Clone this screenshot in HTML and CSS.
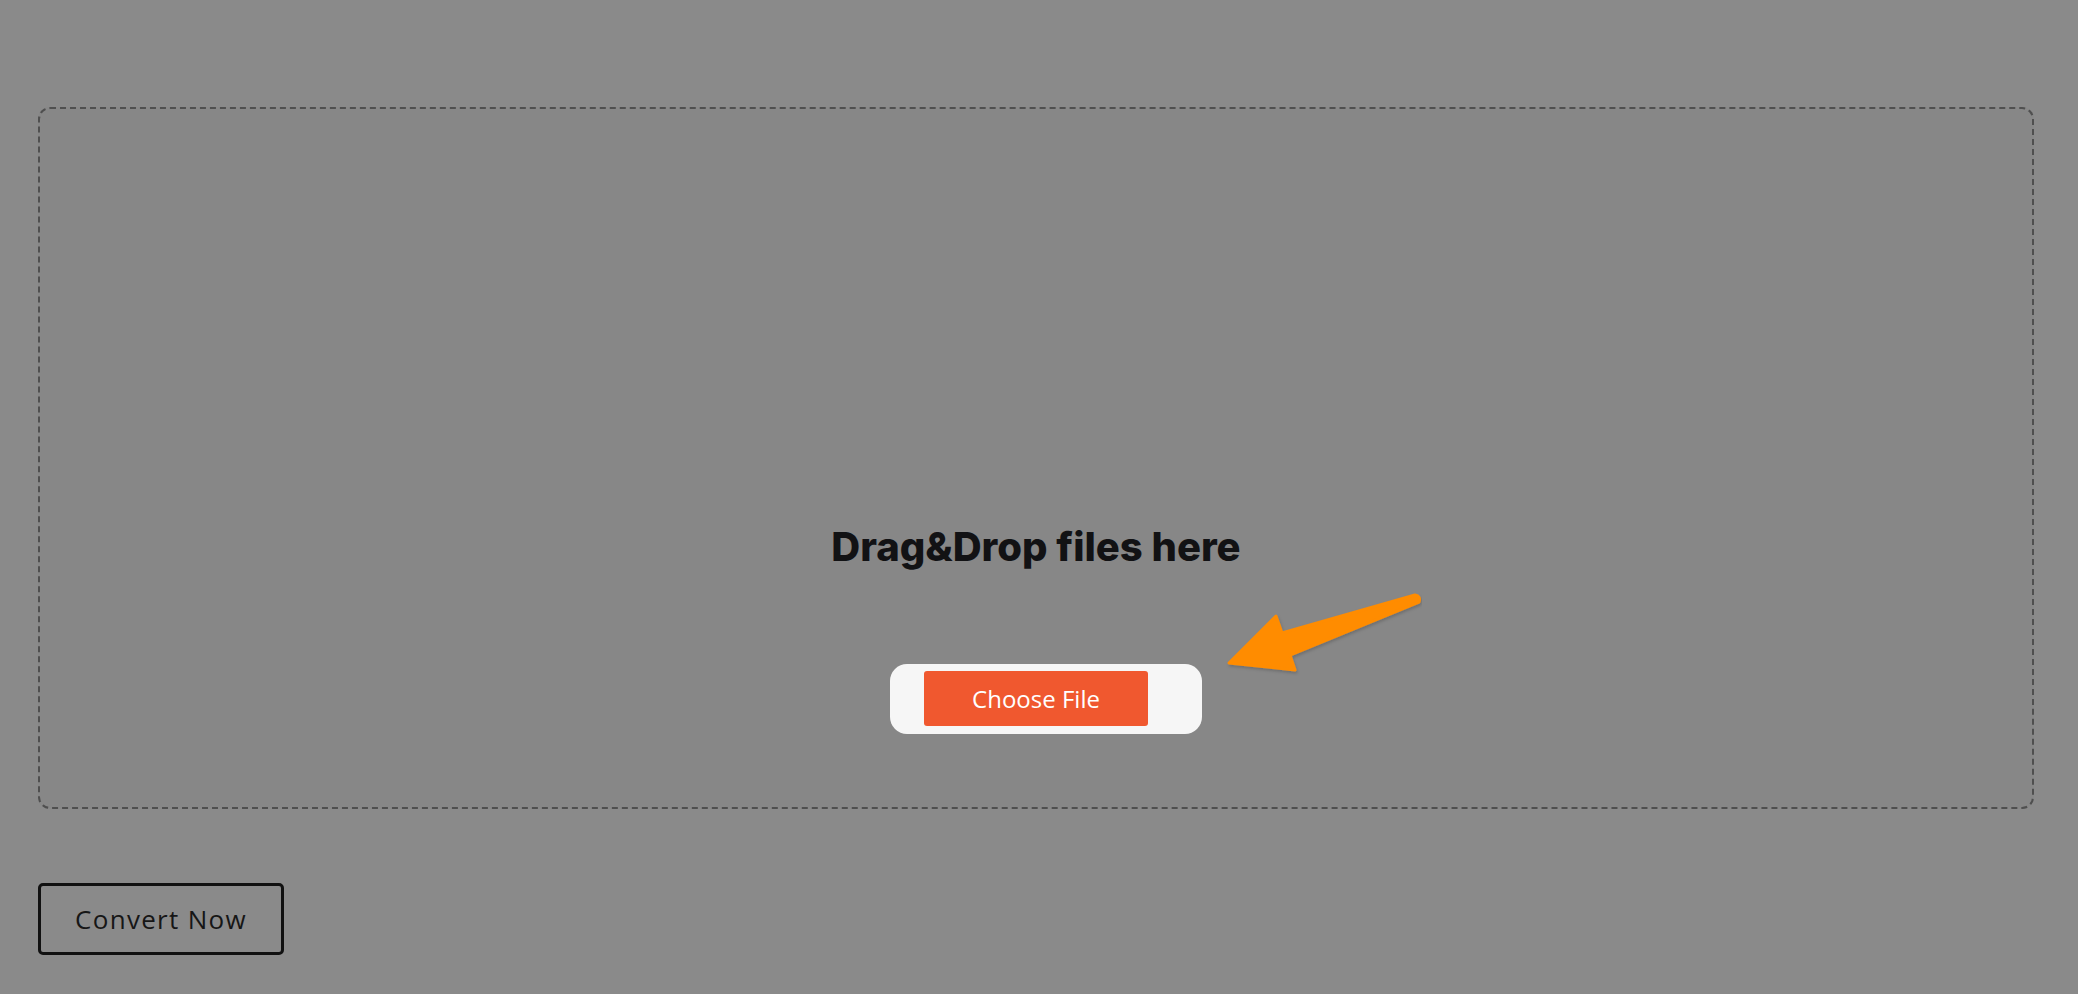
FILE: index.html
```html
<!DOCTYPE html>
<html lang="en">
<head>
<meta charset="utf-8">
<title>Convert</title>
<link rel="stylesheet" href="styles.css">
</head>
<body>
<main class="page">
  <section class="dropzone">
    <h2 class="drop-title">Drag&amp;Drop files here</h2>
    <div class="file-field">
      <button class="choose-btn" type="button">Choose File</button>
      <svg class="pointer-arrow" width="200" height="84" viewBox="1222 594 200 84" aria-hidden="true">
        <defs>
          <filter id="sh" x="-10%" y="-20%" width="130%" height="150%">
            <feDropShadow dx="1" dy="2" stdDeviation="1.5" flood-color="#000" flood-opacity="0.18"/>
          </filter>
        </defs>
        <path filter="url(#sh)" fill="#ff8c00" stroke="#ff8c00" stroke-width="3" stroke-linejoin="round"
          d="M1229 665 L1276 618 L1282 635 L1415 597 Q1421 598 1419 604 L1290 657 L1295 672 Z"/>
      </svg>
    </div>
  </section>
  <button class="convert-btn" type="button">Convert Now</button>
</main>
</body>
</html>
```

FILE: styles.css
```css
* { box-sizing: border-box; }

html, body {
  margin: 0;
  padding: 0;
  background: #8a8a8a;
}

body {
  font-family: "Inter", "Open Sans", sans-serif;
  color: #111;
}

.page {
  padding: 107px 44px 0 38px;
  display: flex;
  flex-direction: column;
  align-items: flex-start;
}

.dropzone {
  width: 100%;
  height: 702px;
  border: 2px dashed #4f4f4f;
  border-radius: 12px;
  background: #878787;
  display: flex;
  flex-direction: column;
  align-items: center;
  padding-top: 414px;
}

.drop-title {
  margin: 0;
  font-family: "Inter", sans-serif;
  font-weight: 800;
  font-size: 40px;
  line-height: 48px;
  color: #121214;
  letter-spacing: 0;
}

.file-field {
  position: relative;
  margin-top: 93px;
  margin-left: 20px;
  width: 312px;
  height: 70px;
  background: #f6f6f6;
  border-radius: 17px;
  padding: 7px 0 0 34px;
}

.choose-btn {
  width: 224px;
  height: 55px;
  border: none;
  border-radius: 3px;
  background: #f0582f;
  color: #fff;
  font-family: "Open Sans", sans-serif;
  font-size: 24px;
  font-weight: 500;
  padding: 0;
}

.pointer-arrow {
  position: absolute;
  left: 332px;
  top: -72px;
}

.convert-btn {
  margin-top: 74px;
  width: 246px;
  height: 72px;
  border: 3px solid #111;
  border-radius: 5px;
  background: transparent;
  color: #161616;
  font-family: "Open Sans", sans-serif;
  font-size: 26px;
  letter-spacing: 1.3px;
  padding: 0;
}
```
